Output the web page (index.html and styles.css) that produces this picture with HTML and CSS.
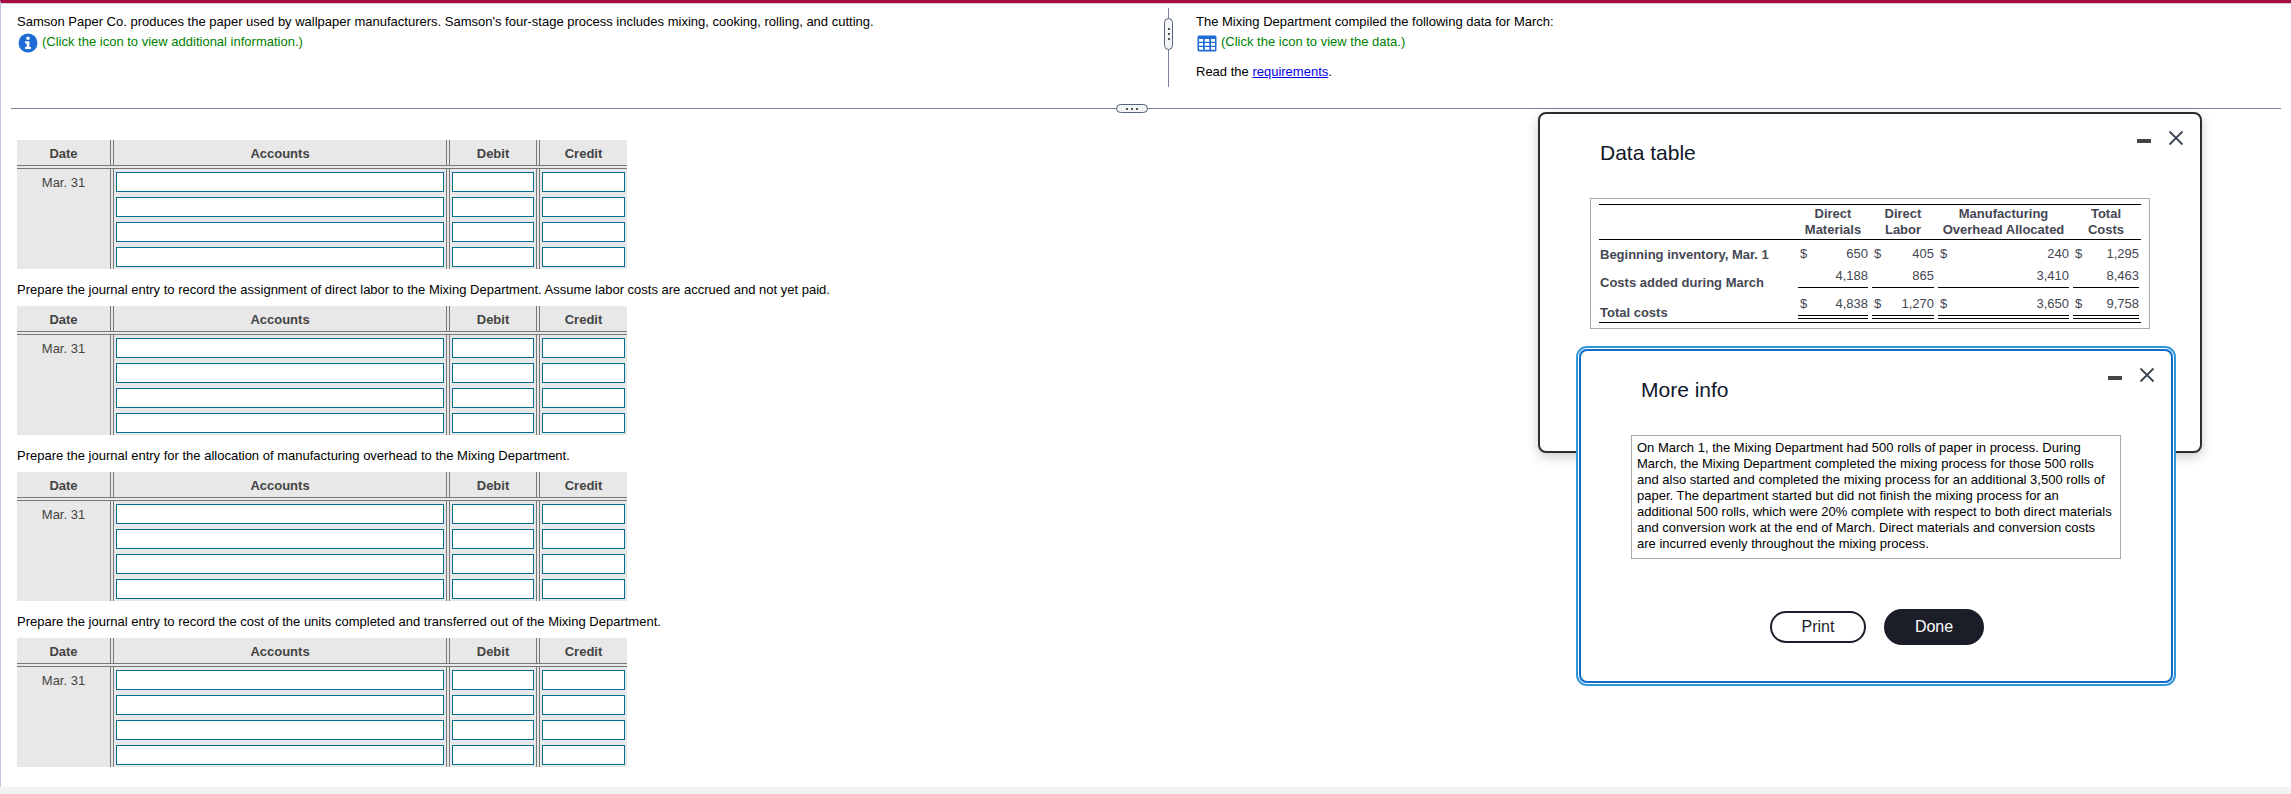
FILE: index.html
```html
<!DOCTYPE html>
<html lang="en">
<head>
    <meta charset="UTF-8">
    <meta name="viewport" content="width=device-width, initial-scale=1.0">
    <title>Samson Paper Co.</title>
    <link rel="stylesheet" href="styles.css">
</head>
<body>
    <main class="page">
        <section class="intro">
            <div class="intro-left">
                <p>Samson Paper Co. produces the paper used by wallpaper manufacturers. Samson's four-stage process includes mixing, cooking, rolling, and cutting.</p>
                <p class="icon-line">
                    <svg class="info-icon" viewBox="0 0 20 20" width="20" height="20"><circle cx="10" cy="10" r="9.5" fill="#1f6cd6"/><circle cx="10" cy="5.3" r="1.7" fill="#fff"/><path d="M7 8.3h4.4v5.6H13V16H7v-2.1h1.7v-3.5H7z" fill="#fff"/></svg>
                    <span>(Click the icon to view additional information.)</span>
                </p>
            </div>
            <div class="divider-v"><button type="button" class="grip grip-v" aria-label="Resize columns"><i></i><i></i><i></i></button></div>
            <div class="intro-right">
                <p>The Mixing Department compiled the following data for March:</p>
                <p class="icon-line">
                    <svg class="table-icon" viewBox="0 0 20 17" width="20" height="17"><rect width="19" height="16" x="0.5" y="0.5" rx="1.5" fill="#1f6cd6"/><path d="M2 4h4v2.700H2zM7.700 4h4.600v2.700H7.700zM14 4h4v2.700h-4zM2 8h4v2.700H2zM7.700 8h4.600v2.700H7.700zM14 8h4v2.700h-4zM2 12h4v2.700H2zM7.700 12h4.600v2.700H7.700zM14 12h4v2.700h-4z" fill="#fff"/></svg>
                    <span>(Click the icon to view the data.)</span>
                </p>
                <p class="read">Read the <a href="#requirements">requirements</a>.</p>
            </div>
        </section>
        <div class="divider-h"><button type="button" class="grip grip-h" aria-label="Resize rows"><i></i><i></i><i></i></button></div>

        <section class="entries">
            <table class="journal">
                <thead><tr><th class="date">Date</th><th>Accounts</th><th class="debit">Debit</th><th class="credit">Credit</th></tr></thead>
                <tbody>
                    <tr><td class="day" rowspan="4">Mar. 31</td><td><input type="text" aria-label="Account 1"></td><td><input type="text" aria-label="Debit 1"></td><td><input type="text" aria-label="Credit 1"></td></tr>
                    <tr><td><input type="text" aria-label="Account 2"></td><td><input type="text" aria-label="Debit 2"></td><td><input type="text" aria-label="Credit 2"></td></tr>
                    <tr><td><input type="text" aria-label="Account 3"></td><td><input type="text" aria-label="Debit 3"></td><td><input type="text" aria-label="Credit 3"></td></tr>
                    <tr><td><input type="text" aria-label="Account 4"></td><td><input type="text" aria-label="Debit 4"></td><td><input type="text" aria-label="Credit 4"></td></tr>
                </tbody>
            </table>
            <p>Prepare the journal entry to record the assignment of direct labor to the Mixing Department. Assume labor costs are accrued and not yet paid.</p>
            <table class="journal">
                <thead><tr><th class="date">Date</th><th>Accounts</th><th class="debit">Debit</th><th class="credit">Credit</th></tr></thead>
                <tbody>
                    <tr><td class="day" rowspan="4">Mar. 31</td><td><input type="text" aria-label="Account 1"></td><td><input type="text" aria-label="Debit 1"></td><td><input type="text" aria-label="Credit 1"></td></tr>
                    <tr><td><input type="text" aria-label="Account 2"></td><td><input type="text" aria-label="Debit 2"></td><td><input type="text" aria-label="Credit 2"></td></tr>
                    <tr><td><input type="text" aria-label="Account 3"></td><td><input type="text" aria-label="Debit 3"></td><td><input type="text" aria-label="Credit 3"></td></tr>
                    <tr><td><input type="text" aria-label="Account 4"></td><td><input type="text" aria-label="Debit 4"></td><td><input type="text" aria-label="Credit 4"></td></tr>
                </tbody>
            </table>
            <p>Prepare the journal entry for the allocation of manufacturing overhead to the Mixing Department.</p>
            <table class="journal">
                <thead><tr><th class="date">Date</th><th>Accounts</th><th class="debit">Debit</th><th class="credit">Credit</th></tr></thead>
                <tbody>
                    <tr><td class="day" rowspan="4">Mar. 31</td><td><input type="text" aria-label="Account 1"></td><td><input type="text" aria-label="Debit 1"></td><td><input type="text" aria-label="Credit 1"></td></tr>
                    <tr><td><input type="text" aria-label="Account 2"></td><td><input type="text" aria-label="Debit 2"></td><td><input type="text" aria-label="Credit 2"></td></tr>
                    <tr><td><input type="text" aria-label="Account 3"></td><td><input type="text" aria-label="Debit 3"></td><td><input type="text" aria-label="Credit 3"></td></tr>
                    <tr><td><input type="text" aria-label="Account 4"></td><td><input type="text" aria-label="Debit 4"></td><td><input type="text" aria-label="Credit 4"></td></tr>
                </tbody>
            </table>
            <p>Prepare the journal entry to record the cost of the units completed and transferred out of the Mixing Department.</p>
            <table class="journal">
                <thead><tr><th class="date">Date</th><th>Accounts</th><th class="debit">Debit</th><th class="credit">Credit</th></tr></thead>
                <tbody>
                    <tr><td class="day" rowspan="4">Mar. 31</td><td><input type="text" aria-label="Account 1"></td><td><input type="text" aria-label="Debit 1"></td><td><input type="text" aria-label="Credit 1"></td></tr>
                    <tr><td><input type="text" aria-label="Account 2"></td><td><input type="text" aria-label="Debit 2"></td><td><input type="text" aria-label="Credit 2"></td></tr>
                    <tr><td><input type="text" aria-label="Account 3"></td><td><input type="text" aria-label="Debit 3"></td><td><input type="text" aria-label="Credit 3"></td></tr>
                    <tr><td><input type="text" aria-label="Account 4"></td><td><input type="text" aria-label="Debit 4"></td><td><input type="text" aria-label="Credit 4"></td></tr>
                </tbody>
            </table>
        </section>
    </main>

    <div class="dialog data-dialog" role="dialog" aria-labelledby="data-title">
        <div class="dialog-head">
            <h2 id="data-title">Data table</h2>
            <button type="button" class="minimize" aria-label="Minimize"></button>
            <button type="button" class="close" aria-label="Close"><svg viewBox="0 0 16 16" width="16" height="16"><path d="M1.500 1.500l13 13M14.500 1.500l-13 13" stroke="#3c4653" stroke-width="1.800" fill="none"/></svg></button>
        </div>
        <div class="data-box">
            <table class="costs">
                <thead>
                    <tr><td></td><th class="materials">Direct<br>Materials</th><th class="labor">Direct<br>Labor</th><th class="overhead">Manufacturing<br>Overhead Allocated</th><th class="total">Total<br>Costs</th></tr>
                </thead>
                <tbody>
                    <tr class="beginning">
                        <th scope="row">Beginning inventory, Mar. 1</th>
                        <td><div><span>$</span><span>650</span></div></td>
                        <td><div><span>$</span><span>405</span></div></td>
                        <td><div><span>$</span><span>240</span></div></td>
                        <td><div><span>$</span><span>1,295</span></div></td>
                    </tr>
                    <tr class="added">
                        <th scope="row">Costs added during March</th>
                        <td><div><span></span><span>4,188</span></div></td>
                        <td><div><span></span><span>865</span></div></td>
                        <td><div><span></span><span>3,410</span></div></td>
                        <td><div><span></span><span>8,463</span></div></td>
                    </tr>
                    <tr class="sum">
                        <th scope="row">Total costs</th>
                        <td><div><span>$</span><span>4,838</span></div></td>
                        <td><div><span>$</span><span>1,270</span></div></td>
                        <td><div><span>$</span><span>3,650</span></div></td>
                        <td><div><span>$</span><span>9,758</span></div></td>
                    </tr>
                </tbody>
            </table>
        </div>
    </div>

    <div class="dialog info-dialog" role="dialog" aria-labelledby="info-title">
        <div class="dialog-head">
            <h2 id="info-title">More info</h2>
            <button type="button" class="minimize" aria-label="Minimize"></button>
            <button type="button" class="close" aria-label="Close"><svg viewBox="0 0 16 16" width="16" height="16"><path d="M1.500 1.500l13 13M14.500 1.500l-13 13" stroke="#3c4653" stroke-width="1.800" fill="none"/></svg></button>
        </div>
        <p class="info-box">On March 1, the Mixing Department had 500 rolls of paper in process. During March, the Mixing Department completed the mixing process for those 500 rolls and also started and completed the mixing process for an additional 3,500 rolls of paper. The department started but did not finish the mixing process for an additional 500 rolls, which were 20% complete with respect to both direct materials and conversion work at the end of March. Direct materials and conversion costs are incurred evenly throughout the mixing process.</p>
        <div class="dialog-actions">
            <button type="button" class="print">Print</button>
            <button type="button" class="done">Done</button>
        </div>
    </div>
</body>
</html>
```
FILE: styles.css
```css
* {
    box-sizing: border-box;
}
body {
    margin: 0;
    background-color: #f2f2f2;
    color: #000;
    font-family: Arial, "Liberation Sans", sans-serif;
    font-size: 13px;
    line-height: 20px;
    position: relative;
}
p {
    margin: 0;
}
.page {
    background-color: #fff;
    border-top: 3px solid #a90e41;
    border-left: 1px solid #c3c5dc;
    box-shadow: inset 0 1px 0 #d4d4dc;
    padding: 5px 10px 20px;
}
.intro {
    display: flex;
    height: 79px;
}
.intro-left {
    width: calc(50% + 18px);
    padding: 4px 0 0 6px;
}
.intro-right {
    flex: 1;
    padding: 4px 0 0 23px;
}
.icon-line {
    display: flex;
    align-items: flex-start;
    gap: 4px;
    padding-left: 1px;
    color: #008000;
}
.info-icon {
    margin-top: 1px;
}
.table-icon {
    margin-top: 3px;
}
.read {
    margin-top: 10px;
}
a {
    color: #0000ee;
}
.divider-v {
    display: flex;
    justify-content: center;
    width: 9px;
    padding-top: 10px;
    background: linear-gradient(#7a839d, #7a839d) center / 1px 100% no-repeat;
}
.divider-h {
    display: flex;
    justify-content: center;
    height: 9px;
    margin-top: 17px;
    padding-right: 28px;
    background: linear-gradient(#7a839d, #7a839d) center / 100% 1px no-repeat;
}
.grip {
    display: flex;
    align-items: center;
    justify-content: center;
    gap: 3px;
    padding: 0;
    border: 1px solid #566478;
    border-radius: 5px;
    background-color: #f2f4f5;
}
.grip i {
    width: 2px;
    height: 2px;
    background-color: #555;
}
.grip-v {
    flex-direction: column;
    width: 9px;
    height: 32px;
}
.grip-h {
    width: 32px;
    height: 9px;
}
.entries {
    padding: 27px 0 0 6px;
}
.entries p {
    padding: 11px 0 6px;
}
.journal {
    width: 610px;
    table-layout: fixed;
    border-collapse: collapse;
    background-color: #e8e8e8;
    color: #444;
}
.journal th {
    height: 27px;
    padding: 3px 0 0;
    border-bottom: 4px double #777;
}
.journal td {
    padding: 3px 2px 2px;
}
.journal th + th,
.journal td + td,
.journal tr + tr td:first-child {
    border-left: 4px double #777;
}
.journal .date {
    width: 95px;
}
.journal .debit {
    width: 90px;
}
.journal .credit {
    width: 89px;
}
.journal .day {
    padding-top: 4px;
    vertical-align: top;
    text-align: center;
}
.journal input {
    display: block;
    width: 100%;
    height: 20px;
    padding: 0 3px;
    border: 1px solid #056f92;
    background-color: #fff;
    font: inherit;
}
.dialog {
    position: absolute;
    background-color: #fff;
    border: 2px solid #2b2d31;
    border-radius: 8px;
    padding: 0 50px;
    box-shadow: 0 4px 12px rgba(0, 0, 0, 0.2);
}
.data-dialog {
    top: 112px;
    right: 89px;
    width: 664px;
    height: 341px;
}
.info-dialog {
    top: 349px;
    right: 118px;
    width: 594px;
    height: 334px;
    border-color: #0f6cc8;
    outline: 2px solid #2f98da;
    outline-offset: 1px;
    box-shadow: 0 0 0 1px #fff;
}
.dialog-head {
    display: flex;
    align-items: flex-start;
    height: 84px;
    margin-right: -34px;
    padding: 16px 0 0 10px;
}
.dialog h2 {
    flex: 1;
    margin: 11px 0 0;
    color: #10172a;
    font-size: 21px;
    font-weight: normal;
    line-height: 24px;
}
.minimize {
    width: 14px;
    height: 4px;
    margin: 9px 17px 0 0;
    padding: 0;
    border: 0;
    background-color: #444;
}
.close {
    height: 16px;
    padding: 0;
    border: 0;
    background: none;
    line-height: 0;
}
.data-box {
    padding: 5px 8px;
    border: 1px solid #aaa;
}
.costs {
    width: 100%;
    border-spacing: 0;
    table-layout: fixed;
    border-top: 1px solid #000;
    border-bottom: 1px solid #000;
    color: #444753;
    line-height: 16px;
}
.costs th,
.costs td {
    padding: 0 2px;
    vertical-align: top;
}
.costs thead th,
.costs thead td {
    padding: 1px 0;
    border-bottom: 1px solid #000;
}
.costs .materials {
    width: 74px;
}
.costs .labor {
    width: 66px;
}
.costs .overhead {
    width: 135px;
}
.costs .total {
    width: 70px;
}
.costs tbody th {
    text-align: left;
    vertical-align: bottom;
    padding: 0 0 1px 1px;
}
.costs td div {
    display: flex;
    justify-content: space-between;
    padding: 4px 0 3px 2px;
}
.beginning {
    height: 24px;
}
.beginning td div {
    padding-top: 6px;
    padding-bottom: 0;
}
.added {
    height: 28px;
}
.added td div {
    border-bottom: 1px solid #000;
}
.sum {
    height: 30px;
}
.sum td div {
    border-bottom: 4px double #000;
}
.info-box {
    padding: 4px 5px 6px;
    border: 1px solid #aaa;
    line-height: 16px;
}
.dialog-actions {
    display: flex;
    align-items: center;
    justify-content: center;
    gap: 18px;
    margin-top: 50px;
    padding-left: 2px;
}
.dialog-actions button {
    border: 2px solid #1b1e29;
    border-radius: 18px;
    font-family: inherit;
    font-size: 16px;
}
.print {
    width: 96px;
    height: 32px;
    background-color: #fff;
    color: #1b1e29;
}
.done {
    width: 100px;
    height: 36px;
    background-color: #1b1e29;
    color: #fff;
}
```
